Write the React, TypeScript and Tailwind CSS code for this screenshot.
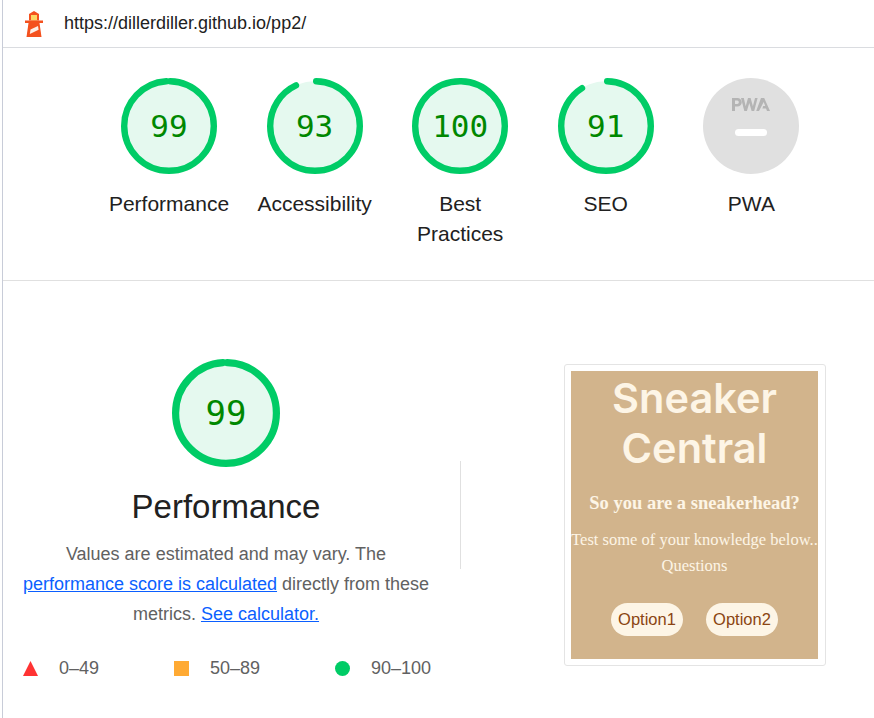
const GREEN = '#00cc66';

function Gauge({ score, size, textClass }: { score: number; size: number; textClass: string }) {
  // 99 and 100 nearly close the ring, the rest leave a visible gap
  const r = 56;
  const circ = 2 * Math.PI * r;
  const len = (score / 100) * circ;
  return (
    <div className="relative shrink-0" style={{ width: size, height: size }}>
      <svg viewBox="0 0 120 120" className="w-full h-full block -rotate-90">
        <circle cx="60" cy="60" r="56" fill="#e5f9ef" stroke="none" />
        <circle
          cx="60"
          cy="60"
          r={r}
          fill="none"
          stroke={GREEN}
          strokeWidth="8"
          strokeLinecap="round"
          strokeDasharray={`${len - 2} ${circ}`}
          strokeDashoffset="-1.5"
        />
      </svg>
      <div
        className={`absolute inset-0 flex items-center justify-center text-[#008800] ${textClass}`}
        style={{ fontFamily: '"DejaVu Sans Mono", "Liberation Mono", monospace' }}
      >
        {score}
      </div>
    </div>
  );
}

function ScoreItem({ score, label }: { score: number; label: string }) {
  return (
    <div className="w-[145.6px] shrink-0 flex flex-col items-center">
      <Gauge score={score} size={96} textClass="text-[31px]" />
      <div className="mt-[15px] w-[126px] text-center text-[21px] leading-[30px] text-[#212121]">{label}</div>
    </div>
  );
}

function PwaItem() {
  return (
    <div className="w-[145.6px] shrink-0 flex flex-col items-center">
      <div className="w-24 h-24 rounded-full bg-[#e0e0e0] flex flex-col items-center">
        <svg viewBox="0 0 38 13" className="w-[38px] h-[13px] mt-5" fill="#b4b4b4">
          <path fillRule="evenodd" d="M0 0h5.5a4.2 4.2 0 0 1 0 8.5H3V13H0zM3 2.6v3.3h2.2a1.65 1.65 0 0 0 0-3.3z" />
          <path d="M9 0h2.8l1.9 8.2L16 0h2.6l2.3 8.2L23 0h2.6l-3.4 13h-2.6L17.3 5l-2.4 8h-2.6z" />
          <path d="M29 0h3.2L38 13h-3l-1-2.6h-3.6l.8-2.5h2l-1.5-4L27 13h-2.8z" />
        </svg>
        <div className="w-8 h-[7px] rounded-full bg-white mt-[18px]" />
      </div>
      <div className="mt-[15px] text-center text-[21px] leading-[30px] text-[#212121]">PWA</div>
    </div>
  );
}

function Lighthouse() {
  return (
    <svg viewBox="0 0 18 26" className="w-[18px] h-[26px] block">
      <path d="M9 0 14 3V9.5H4V3z" fill="#f4511e" />
      <rect x="6" y="4" width="6" height="5.5" fill="#fdd663" />
      <rect x="0" y="9.5" width="18" height="2.5" fill="#f4511e" />
      <path d="M3.5 12h11L16.5 26H1.5z" fill="#f4511e" />
      <path d="M5.5 18.5 13 15l.6 3.8L4.8 23z" fill="#fdeee6" />
    </svg>
  );
}

export default function App() {
  return (
    <div className="w-[874px] h-[718px] overflow-hidden bg-white" style={{ fontFamily: '"Liberation Sans", Arial, sans-serif' }}>
      <div className="ml-[2px] h-full border-l border-[#c8ccd8]">
        {/* Topbar */}
        <div className="h-[48px] border-b border-[#dadce0] flex items-center pl-[22px]">
          <Lighthouse />
          <span className="ml-[21px] text-[18px] text-[#212121]">https://dillerdiller.github.io/pp2/</span>
        </div>

        {/* Scores */}
        <div className="h-[233px] border-b border-[#e0e0e0] pt-[30px] pl-[93.2px] flex items-start">
          <ScoreItem score={99} label="Performance" />
          <ScoreItem score={93} label="Accessibility" />
          <ScoreItem score={100} label="Best Practices" />
          <ScoreItem score={91} label="SEO" />
          <PwaItem />
        </div>

        {/* Performance detail */}
        <div className="flex items-start">
          <div className="w-[446px] shrink-0 pt-[78px] flex flex-col items-center">
            <Gauge score={99} size={108} textClass="text-[34px]" />
            <h1 className="mt-[20px] text-[33px] leading-[40px] text-[#212121]">Performance</h1>
            <p className="mt-[12px] w-[410px] text-center text-[18px] leading-[30px] text-[#616161]">
              Values are estimated and may vary. The{' '}
              <span className="text-[#0b5fff] underline">performance score is calculated</span> directly from these
              metrics. <span className="text-[#0b5fff] underline">See calculator.</span>
            </p>
            <div className="mt-[27px] ml-[2px] w-[408px] flex justify-between text-[18px] leading-[24px] text-[#616161]">
              <div className="flex items-center gap-[21px]">
                <svg viewBox="0 0 15 15" className="w-[15px] h-[15px]">
                  <path d="M7.5 0 15 15H0z" fill="#ff3333" />
                </svg>
                0–49
              </div>
              <div className="flex items-center gap-[21px]">
                <div className="w-[15px] h-[15px] bg-[#ffaa33]" />
                50–89
              </div>
              <div className="flex items-center gap-[21px]">
                <div className="w-[15px] h-[15px] rounded-full bg-[#00cc66]" />
                90–100
              </div>
            </div>
          </div>

          <div className="w-px h-[108px] bg-[#e0e0e0] mt-[180px] ml-[11px] shrink-0" />

          {/* Page screenshot */}
          <div className="ml-[103px] mt-[83px] w-[262px] h-[302px] shrink-0 border border-[#e4e4e4] rounded-[3px] pl-[6px] pr-[7px] py-[6px]">
            <div className="h-[288px] bg-[#d2b48c] flex flex-col items-center text-[#fdf5e6]">
              <div className="mt-[2px] text-center text-[41.5px] leading-[50px] font-semibold" style={{ fontFamily: 'Inter, sans-serif' }}>
                Sneaker<br />Central
              </div>
              <div className="mt-[17px] text-[18.5px] leading-[26px] font-bold" style={{ fontFamily: '"Liberation Serif", serif' }}>So you are a sneakerhead?</div>
              <div className="mt-[11px] text-center text-[16.5px] leading-[26px] whitespace-nowrap" style={{ fontFamily: '"Liberation Serif", serif' }}>
                Test some of your knowledge below..<br />Questions
              </div>
              <div className="mt-[24px] flex gap-[23px]">
                <div className="w-[72px] h-[33px] rounded-full bg-[#fdf5e6] flex items-center justify-center text-[16.5px] text-[#8b4513]">Option1</div>
                <div className="w-[72px] h-[33px] rounded-full bg-[#fdf5e6] flex items-center justify-center text-[16.5px] text-[#8b4513]">Option2</div>
              </div>
            </div>
          </div>
        </div>
      </div>
    </div>
  );
}
